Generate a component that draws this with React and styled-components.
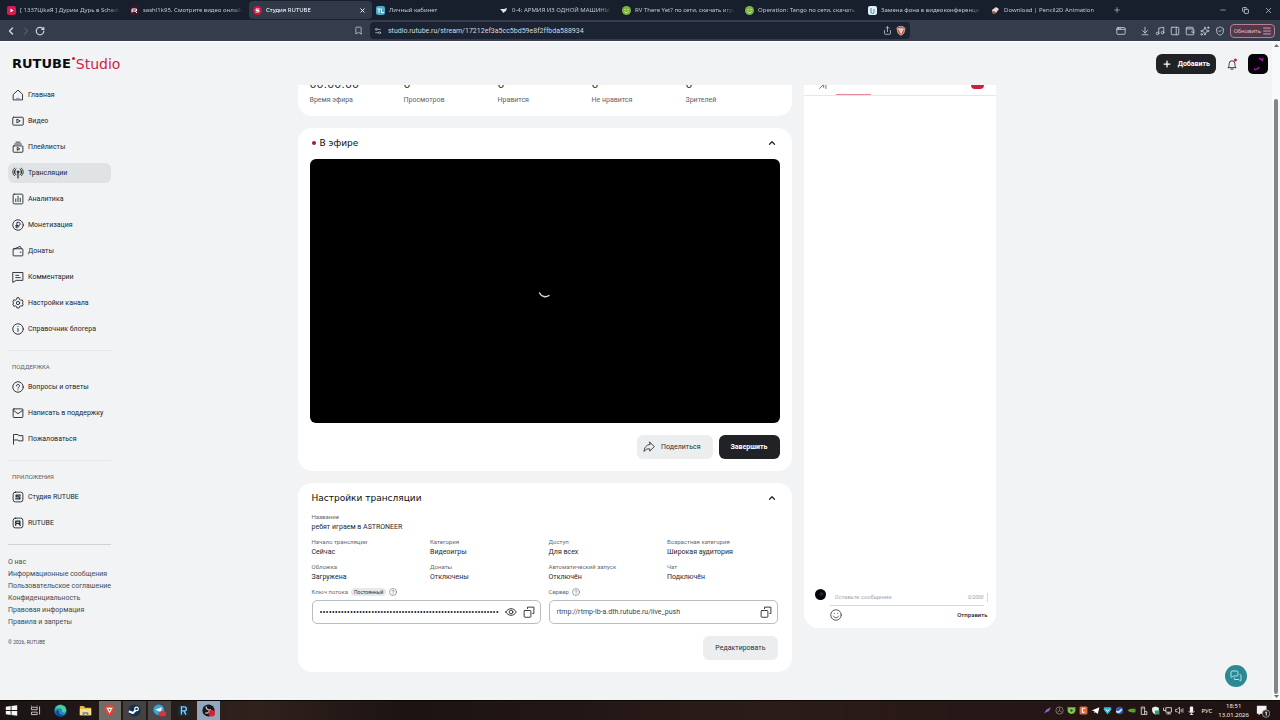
import React from 'react';
import styled, {createGlobalStyle} from 'styled-components';
import {
    AppWindow, ArrowDownToLine, Bookmark, ChevronLeft, ChevronRight, ChevronUp, Copy, Menu,
    MessagesSquare, Minus, Music, PanelRight, Plus, RotateCw, Settings2, Share, ShieldCheck, Sparkles, Wallet, X
} from 'lucide-react';

const GlobalStyle = createGlobalStyle`
  * {
    box-sizing: border-box;
  }
  body {
    margin: 0;
    background-color: #f1f3f4;
    color: #23282f;
    font-family: Roboto, "Liberation Sans", sans-serif;
    font-size: 7px;
    line-height: 10px;
  }
  button, input {
    margin: 0;
    padding: 0;
    border: none;
    background: none;
    color: inherit;
    font: inherit;
  }
  svg {
    display: block;
    flex-shrink: 0;
  }
`;

const Window = styled.div`
  display: flex;
  flex-direction: column;
  height: 100vh;
  overflow: hidden;
`;

/* Browser */

const TabStrip = styled.div`
  display: flex;
  height: 20px;
  padding-left: 3px;
  background-color: #171e2c;
  color: #c3c8d0;
  font-family: "Noto Sans", sans-serif;
  font-size: 6px;
`;

const Tab = styled.button`
  display: flex;
  align-items: center;
  flex: 0 1 123px;
  min-width: 0;
  gap: 4px;
  margin: 1px 0;
  padding: 0 6px 0 4px;
  border-radius: 4px;
  text-align: left;
  background-color: ${props => props.$active ? '#323a4a' : 'transparent'};
  color: ${props => props.$active ? '#ffffff' : 'inherit'};
  white-space: nowrap;
`;

const TabTitle = styled.span`
  flex: 1;
  min-width: 0;
  overflow: hidden;
  mask-image: linear-gradient(to right, #000 88%, transparent);
`;

const WindowControls = styled.div`
  display: flex;
  align-items: center;
  margin-left: auto;
  button {
    display: flex;
    justify-content: center;
    width: 23px;
  }
`;

const NewTab = styled.button`
  padding: 0 3px;
`;

const Toolbar = styled.div`
  display: flex;
  align-items: center;
  justify-content: space-between;
  height: 21px;
  padding: 0 5px;
  background-color: #353d4c;
  color: #ccd1d9;
`;

const ToolGroup = styled.div`
  display: flex;
  align-items: center;
  flex: 1;
  justify-content: ${props => props.$end ? 'flex-end' : 'flex-start'};
  gap: ${props => props.$end ? '5px' : '3px'};
  button {
    display: flex;
    color: inherit;
  }
  button:disabled {
    color: #6b7382;
  }
`;

const AddressBar = styled.div`
  display: flex;
  align-items: center;
  flex: 0 1 540px;
  gap: 4px;
  height: 17px;
  padding: 0 4px;
  border-radius: 4px;
  background-color: #1c2434;
  input {
    flex: 1;
    min-width: 0;
    padding-left: 2px;
    color: #d4d8df;
  }
`;

const Spacer = styled.span`
  flex: ${props => props.$fixed ? '0 0 4px' : 1};
`;

const UpdateButton = styled.button`
  && {
    align-items: center;
    gap: 1px;
    height: 14px;
    padding: 0 2px 0 3px;
    border: 1px solid #b67f92;
    border-radius: 4px;
    background-color: #523a4c;
    color: #e3b6c4;
    font-size: 6px;
  }
`;

/* Page */

const Viewport = styled.div`
  display: flex;
  flex: 1;
  min-height: 0;
  border-top: 1px solid #ffffff;
`;

const Page = styled.div`
  display: flex;
  flex-direction: column;
  flex: 1;
  min-width: 0;
`;

const ScrollTrack = styled.div`
  display: flex;
  flex-direction: column;
  align-items: center;
  justify-content: space-between;
  width: 8px;
  padding: 2px 0;
  background-color: #f8f9fa;
`;

const ScrollThumb = styled.div`
  flex: 1;
  width: 4px;
  margin: 52px 0 1px;
  border-radius: 2px;
  background-color: #858585;
`;

const Header = styled.header`
  display: flex;
  align-items: center;
  justify-content: space-between;
  height: 43px;
  padding: 0 4px 0 12px;
`;

const Logo = styled.a`
  display: flex;
  align-items: center;
  color: #0b0c0f;
  font-family: "DejaVu Sans", sans-serif;
  font-size: 13px;
  font-weight: bold;
  line-height: 14px;
  text-decoration: none;
`;

const LogoDot = styled.i`
  align-self: flex-start;
  width: 3px;
  height: 3px;
  margin: 0 1px;
  border-radius: 50%;
  background-color: #d3133f;
`;

const LogoStudio = styled.span`
  color: #cf1e49;
  font-size: 14px;
  font-weight: normal;
`;

const HeaderActions = styled.div`
  display: flex;
  align-items: center;
  gap: 10px;
`;

const Button = styled.button`
  display: flex;
  align-items: center;
  justify-content: center;
  gap: 6px;
  height: ${props => props.$small ? '20px' : '24px'};
  padding: 0 ${props => props.$small ? '6px' : '12px'};
  border-radius: 6px;
  background-color: ${props => props.$dark ? '#202226' : '#ebedef'};
  color: ${props => props.$dark ? '#ffffff' : '#2b3037'};
  font-weight: ${props => props.$dark ? 'bold' : 'normal'};
`;

const ShareButton = styled(Button)`
  padding-left: 6px;
`;

const IconButton = styled.button`
  display: flex;
`;

const Body = styled.div`
  display: flex;
  flex: 1;
  min-height: 0;
`;

const Sidebar = styled.nav`
  flex: 0 0 118px;
  padding: 0 8px;
`;

const NavList = styled.div`
  display: flex;
  flex-direction: column;
  gap: 6px;
`;

const NavItem = styled.a`
  display: flex;
  align-items: center;
  gap: 4px;
  height: 20px;
  padding: 0 4px;
  border-radius: 6px;
  background-color: ${props => props.$active ? '#dfe3e6' : 'transparent'};
  color: #22272e;
  text-decoration: none;
  white-space: nowrap;
`;

const Divider = styled.hr`
  height: 1px;
  margin: 11px 0;
  border: none;
  background-color: ${props => props.$strong ? '#d0d3d6' : '#e3e6e8'};
`;

const NavCaption = styled.div`
  margin-bottom: 5px;
  padding-left: 4px;
  color: #5d646c;
  font-size: 6px;
`;

const FooterLink = styled.a`
  display: block;
  color: #454b53;
  line-height: 12px;
  text-decoration: none;
  white-space: nowrap;
`;

const Copyright = styled.div`
  margin-top: 9px;
  color: #454b53;
  font-size: 5px;
`;

const Content = styled.main`
  display: flex;
  justify-content: center;
  flex: 1;
  gap: 12px;
  min-width: 0;
  padding-right: 98px;
`;

const Column = styled.div`
  display: flex;
  flex-direction: column;
  flex: 0 1 494px;
  gap: 12px;
`;

const Card = styled.section`
  padding: 8px 12px 12px;
  border-radius: 14px;
  background-color: #ffffff;
`;

/* The page is scrolled, so the top of this card is under the header */
const StatsCard = styled.section`
  display: grid;
  grid-template-columns: repeat(5, 1fr);
  align-content: end;
  height: 31px;
  padding: 0 12px 11px;
  border-radius: 0 0 14px 14px;
  background-color: #ffffff;
  overflow: hidden;
`;

const StatValue = styled.div`
  font-family: "DejaVu Sans", sans-serif;
  font-size: 11px;
  line-height: 14px;
`;

const StatLabel = styled.div`
  margin-top: 3px;
  color: #5d646c;
`;

const CardHeader = styled.div`
  display: flex;
  align-items: center;
  gap: 4px;
  height: 14px;
  padding: 0 3px 0 2px;
  button {
    margin-left: auto;
  }
`;

const CardTitle = styled.h2`
  margin: 0;
  color: #0b0c0f;
  font-family: "DejaVu Sans", sans-serif;
  font-size: 9px;
  font-weight: normal;
  line-height: 14px;
`;

const LiveDot = styled.i`
  width: 4px;
  height: 4px;
  border-radius: 50%;
  background-color: #b3123f;
`;

const Player = styled.div`
  display: flex;
  align-items: center;
  justify-content: center;
  aspect-ratio: 16 / 9;
  margin-top: 9px;
  border-radius: 6px;
  background-color: #000000;
`;

const Actions = styled.div`
  display: flex;
  justify-content: flex-end;
  gap: 6px;
  margin-top: 12px;
`;

const Settings = styled.div`
  display: grid;
  grid-template-columns: repeat(4, 1fr);
  gap: 5px 8px;
  margin-top: 7px;
  padding: 0 2px;
`;

const Field = styled.div`
  grid-column: span ${props => props.$span || 1};
`;

const FieldLabel = styled.label`
  display: flex;
  align-items: center;
  gap: 3px;
  color: #646b74;
  font-size: 6px;
`;

const Badge = styled.span`
  padding: 0 3px;
  border-radius: 4px;
  background-color: #e6e8ea;
  color: #2b3037;
  font-size: 5px;
  line-height: 8px;
`;

const InputBox = styled.div`
  display: flex;
  align-items: center;
  gap: 6px;
  height: 24px;
  margin-top: 3px;
  padding: 0 5px 0 7px;
  border: 1px solid #b9bdc2;
  border-radius: 5px;
  input {
    flex: 1;
    min-width: 0;
    color: #3c424a;
  }
  input[type="password"] {
    color: #14191f;
    font-size: 9px;
  }
`;

const SettingsActions = styled(Actions)`
  padding: 0 2px;
`;

const Chat = styled.aside`
  display: flex;
  flex-direction: column;
  flex: 0 1 192px;
  margin-bottom: 72px;
  border-radius: 0 0 14px 14px;
  background-color: #ffffff;
`;

const ChatHeader = styled.div`
  display: flex;
  align-items: flex-end;
  height: 11px;
  padding: 0 12px 0 14px;
  border-bottom: 1px solid #e4e6e8;
  overflow: hidden;
`;

const ChatCollapse = styled.button`
  display: flex;
  margin: 0 9px 6px 0;
`;

const ChatTab = styled.button`
  height: 18px;
  padding: 0 3px 8px;
  border-bottom: 1px solid #e58a9b;
  color: #d8506b;
  font-size: 6px;
`;

const Toggle = styled.input`
  appearance: none;
  width: 13px;
  height: 8px;
  margin: 0 0 6px auto;
  border-radius: 4px;
  background-color: #cf1f3f;
`;

const ChatForm = styled.form`
  display: grid;
  grid-template-columns: 12px 1fr 1px;
  gap: 0 3px;
  margin-top: auto;
  padding: 0 8px 4px 11px;
`;

const ChatAvatar = styled.span`
  width: 11px;
  height: 11px;
  border-radius: 50%;
  background: radial-gradient(circle at 60% 45%, #4b2a52 0, #050407 30%);
`;

const ChatLine = styled.div`
  display: flex;
  align-items: center;
  height: 17px;
  padding-left: 5px;
  border-bottom: 1px solid #d5d8db;
  color: #9aa0a6;
  font-size: 6px;
  input {
    flex: 1;
    min-width: 0;
  }
  input::placeholder {
    color: #a2a7ad;
    opacity: 1;
    font-style: italic;
  }
`;

const Counter = styled.span`
  font-size: 5px;
  font-style: italic;
`;

const ChatScroll = styled.i`
  height: 9px;
  margin-top: 4px;
  background-color: #d5d8db;
`;

const ChatTools = styled.div`
  grid-column: 2 / -1;
  display: flex;
  align-items: center;
  justify-content: space-between;
  height: 18px;
`;

const SendButton = styled.button`
  font-size: 6px;
  font-weight: 500;
`;

const HelpButton = styled.button`
  position: fixed;
  right: 33px;
  bottom: 33px;
  display: flex;
  align-items: center;
  justify-content: center;
  width: 22px;
  height: 22px;
  border-radius: 50%;
  background-color: #2a8993;
  color: #b6e4e9;
`;

/* Taskbar */

const Taskbar = styled.footer`
  display: flex;
  align-items: center;
  justify-content: space-between;
  height: 20px;
  border-top: 1px solid #0a0606;
  background: linear-gradient(to right, #191413, #30211d 20%, #1c1312 32%, #2b1c19 60%, #1f1212);
  color: #f2f2f2;
  font-family: "Noto Sans", sans-serif;
  font-size: 6px;
`;

const Apps = styled.div`
  display: grid;
  grid-template-columns: repeat(9, 1fr);
  gap: 2px;
  width: 220px;
  height: 100%;
`;

const AppButton = styled.button`
  display: flex;
  align-items: center;
  justify-content: center;
  background-color: ${props => props.$tile || 'transparent'};
`;

const Tray = styled.div`
  display: flex;
  align-items: center;
  padding-right: 10px;
`;

const TrayIcon = styled.span`
  display: flex;
  justify-content: center;
  width: 12px;
`;

const Language = styled.span`
  margin: 0 6px 0 4px;
`;

const Clock = styled.time`
  margin-right: 7px;
  line-height: 9px;
  text-align: center;
`;

const Icon = ({size = 12, width = 1.2, children}) => (
    <svg width={size} height={size} viewBox="0 0 16 16" fill="none" stroke="currentColor"
         strokeWidth={width} strokeLinecap="round" strokeLinejoin="round" aria-hidden="true">
        {children}
    </svg>
);

const icons = {
    home: <><path d="M2 7 8 1.5 14 7v7.5H2z"/><path d="M6 12.5h4" strokeOpacity=".5"/></>,
    video: <><rect x="1" y="3" width="14" height="10.5" rx="1"/><path d="M6.5 6v4.5L10.5 8.2z"/></>,
    playlists: <><rect x="1.5" y="6.5" width="13" height="8.5" rx="1"/><path d="M3.5 4h9M5.5 1.5h5M7 9v3.5l3-1.7z"/></>,
    live: <><circle cx="8" cy="6.5" r="1.3" fill="currentColor"/><path d="M8 8v6.5" strokeWidth="1.6"/><path d="M5.2 2.5a5.500 5.500 0 0 0 0 8M10.8 2.5a5.500 5.500 0 0 1 0 8M3.500 11.500C.2 10 .2 3 3.500 1.500M12.500 11.500c3.300-1.500 3.300-8.500 0-10M3.300 5v3M12.700 5v3"/></>,
    analytics: <><rect x="1.5" y="1.5" width="13" height="13" rx="1.5"/><path d="M5 11.5V8M8 11.5v-7M11 11.5V7"/></>,
    money: <><circle cx="8" cy="8" r="7"/><path d="M6.5 12V4.5h2.3a2.1 2.1 0 0 1 0 4.2H5M5 10.5h4"/></>,
    donate: <><rect x="1.5" y="5" width="13" height="9.5" rx="1"/><path d="M3.5 5 11 1.8l1.5 3M11 9.7h1"/></>,
    comments: <><path d="M1.5 2h13v10.5h-9L1.5 15z"/><path d="M5 5.8h4M5 8.8h6"/></>,
    settings: <><path d="m6.5 1.5-.6 2-1.5.8-2-.5L1 6.6 2.4 8 1 9.5l1.5 2.8 2-.5 1.4.8.6 2h3l.6-2 1.5-.8 2 .5L15 9.5 13.6 8 15 6.6l-1.5-2.8-2 .5-1.4-.8-.6-2z"/><circle cx="8" cy="8" r="2.2"/></>,
    info: <><circle cx="8" cy="8" r="7"/><path d="M8 7.3v4M8 4.6v.2"/></>,
    question: <><circle cx="8" cy="8" r="7"/><path d="M6 6.5a2 2 0 1 1 3 1.7c-.7.4-1 .7-1 1.4M8 11.8v.1"/></>,
    mail: <><rect x="1.5" y="2.5" width="13" height="11.5" rx="1"/><path d="m2 4.5 6 4.5 6-4.5"/></>,
    flag: <path d="M2 15V2h6l1 1.5h5.5v7H9L8 9.3H2"/>,
    studio: <><rect x="1.5" y="1.5" width="13" height="13" rx="3"/><path d="M11 5.5H5.5v2.4h5v2.6H5" strokeWidth="1.7"/></>,
    rutube: <><rect x="1.5" y="1.5" width="13" height="13" rx="3"/><path d="M5 11V5.5h5.5v3H5M9 8.5l2 2.5" strokeWidth="1.7"/></>,
    bell: <><path d="M3 12.5c1.2-1.3 1.2-3 1.2-5a3.8 3.8 0 0 1 7.6 0c0 2 0 3.7 1.2 5zM6.5 14.8h3"/><circle cx="12.5" cy="2.5" r="2" fill="#c9183f" stroke="none"/></>,
    share: <path d="M9 1.5 15 7.5l-6 6v-3C6 10 3.500 11 1.500 14 1.500 9 4.500 5 9 4.700z"/>,
    eye: <><path d="M1 8c3.5-6 10.5-6 14 0-3.5 6-10.5 6-14 0z"/><circle cx="8" cy="8" r="2.5"/></>,
    copy: <><rect x="1.5" y="6" width="9" height="9" rx="1"/><path d="M6 3.5V1.5h8.5V10H13"/></>,
    smile: <><circle cx="8" cy="8" r="7"/><path d="M4.5 9.5c1.5 3 5.5 3 7 0M5.7 5.8v.2M10.3 5.8v.2"/></>,
    collapse: <path d="M14 3v12M3 15l7-7M5 8h5v5"/>
};

const dot = (fill, label) => (
    <svg width="9" height="9" viewBox="0 0 9 9" aria-hidden="true">
        <circle cx="4.5" cy="4.5" r="4.5" fill={fill}/>
        {label}
    </svg>
);

const square = (fill, mark) => (
    <svg width="9" height="9" viewBox="0 0 9 9" aria-hidden="true">
        <rect width="9" height="9" rx="2" fill={fill}/>
        {mark}
    </svg>
);

const greenFace = dot('#7cb342', <path d="M2.5 3.5h1M5.5 3.5h1M2.5 5.5c1 1.5 3 1.5 4 0" stroke="#dcedc8" fill="none"/>);

const tabs = [
    {title: '[ 1337ЦikaЯ ] Дурим Дурь в Schedu', icon: square('#d51b50', <path d="M3.5 2.5v4l3-2z" fill="#fff"/>)},
    {title: 'sashl1k95. Смотрите видео онлайн,', icon: square('#40132d', <path d="M2 6.5V3h4.5v2H2M5 5l2 2" stroke="#fff" fill="none"/>)},
    {title: 'Студия RUTUBE', icon: dot('#d3133f', <path d="M6.5 3H3v1.5h3V6H2.5" stroke="#fff" fill="none"/>), active: true},
    {title: 'Личный кабинет', icon: square('#4aa9c4', <path d="M1.5 3h3M3 3v4M5.5 2.5v4H8" stroke="#fff" fill="none"/>)},
    {title: '0-4: АРМИЯ ИЗ ОДНОЙ МАШИНЫ', icon: <svg width="9" height="9" viewBox="0 0 9 9"><path d="M1 3h4l3-1-1 3-3 2-1-2z" fill="#e4e6e8"/></svg>},
    {title: 'RV There Yet? по сети, скачать игру', icon: greenFace},
    {title: 'Operation: Tango по сети, скачать и', icon: greenFace},
    {title: 'Замена фона в видеоконференци', icon: square('#dff0f8', <path d="M3 2v4a1.5 1.5 0 0 0 3 0V3" stroke="#3a8fb5" fill="none"/>)},
    {title: 'Download | Pencil2D Animation', icon: <svg width="9" height="9" viewBox="0 0 9 9"><path d="M1 4 5 1l3 2-3 4-3 1z" fill="#e9d6c8"/><path d="M2 5l3 1-1 2H2z" fill="#c6452f"/></svg>}
];

const navItems = [
    ['home', 'Главная'],
    ['video', 'Видео'],
    ['playlists', 'Плейлисты'],
    ['live', 'Трансляции'],
    ['analytics', 'Аналитика'],
    ['money', 'Монетизация'],
    ['donate', 'Донаты'],
    ['comments', 'Комментарии'],
    ['settings', 'Настройки канала'],
    ['info', 'Справочник блогера']
];

const supportItems = [
    ['question', 'Вопросы и ответы'],
    ['mail', 'Написать в поддержку'],
    ['flag', 'Пожаловаться']
];

const appItems = [
    ['studio', 'Студия RUTUBE'],
    ['rutube', 'RUTUBE']
];

const footerLinks = [
    'О нас',
    'Информационные сообщения',
    'Пользовательское соглашение',
    'Конфиденциальность',
    'Правовая информация',
    'Правила и запреты'
];

const stats = [
    ['00:00:00', 'Время эфира'],
    ['0', 'Просмотров'],
    ['0', 'Нравится'],
    ['0', 'Не нравится'],
    ['0', 'Зрителей']
];

const fields = [
    ['Начало трансляции', 'Сейчас'],
    ['Категория', 'Видеоигры'],
    ['Доступ', 'Для всех'],
    ['Возрастная категория', 'Широкая аудитория'],
    ['Обложка', 'Загружена'],
    ['Донаты', 'Отключены'],
    ['Автоматический запуск', 'Отключён'],
    ['Чат', 'Подключён']
];

const apps = [
    {name: 'Пуск', icon: <path d="M1 3.5 7 2.6V7.500H1zM8 2.5 15 1.500v6H8zM1 8.500h6v5L1 12.6zM8 8.500h7v6l-7-1z" fill="#f5f5f5"/>},
    {name: 'Представление задач', icon: <path d="M3 4h7v3H3zM3 10h7v3H3zM3 2v1M10 2v1M13 3v10" stroke="#e6e6e6" fill="none"/>},
    {name: 'Edge', icon: <><circle cx="8" cy="8" r="7.5" fill="#1f86cf"/><path d="M1 7c1-5 6-7 10-5 4 1.5 5 6 3 8-2 1-5 0-4-2 0-3-5-4-9-1z" fill="#4ed08c"/><path d="M6 8c-1 4 3 7 8 5-3 4-10 3-12-2 0-2 2-4 4-3z" fill="#0d4f93"/></>},
    {name: 'Проводник', icon: <><path d="M1 2.5h5l1.5 2H15v9H1z" fill="#e5b447"/><path d="M1 6h14v8H1z" fill="#f9dc85"/><path d="M4.5 14v-4h7v4h-2v-2h-3v2z" fill="#4a94ba"/></>},
    {name: 'Brave', tile: '#706a69', icon: <><path d="M4.5 1h7l3 3-2 7.5L8 15l-4.5-3.5L1.5 4z" fill="#e4452c"/><path d="M4 4.5h8l-2 3.5-2 4-2-4z" fill="#fff"/><path d="M6.5 6h3L8 9z" fill="#e4452c"/></>},
    {name: 'Steam', tile: '#444142', icon: <><circle cx="8" cy="8" r="7.5" fill="#14314f"/><path d="m1 9 5 2 4-4" stroke="#fff" strokeWidth="2.5" fill="none"/><circle cx="10.5" cy="6" r="2.2" fill="#14314f" stroke="#fff" strokeWidth="1.5"/></>},
    {name: 'Telegram', tile: '#4c4847', icon: <><circle cx="7" cy="7" r="6.5" fill="#36a5da"/><path d="m3 7 8-3-1.5 7L7 9z" fill="#fff"/><rect x="7" y="9" width="9" height="6" rx="2" fill="#df3140"/></>},
    {name: 'R', icon: <><rect x="1" y="1" width="14" height="14" fill="#132d40"/><path d="M5.5 13V3.5H9a2.5 2.5 0 0 1 0 5H5.5M8.5 8.5 11 13" stroke="#8fc8df" strokeWidth="1.7" fill="none"/></>},
    {name: 'OBS', tile: '#93a8bd', icon: <><circle cx="8" cy="8" r="7.5" fill="#17181b"/><path d="M5 3c0 4 3 5 6 4M4 11c3 1 5-1 5-4" stroke="#c9ccd0" strokeWidth="1.5" fill="none"/><circle cx="12" cy="11.5" r="4" fill="#e01f2d"/></>}
];

const trayIcons = [
    <path d="M2 13 6 6l8-4-3 7z" fill="#8c66c9"/>,
    <><circle cx="8" cy="8" r="6.5" stroke="#b7b0b0" fill="none"/><path d="M8 8V3M8 8l4 3M8 8l-4 3" stroke="#b7b0b0"/></>,
    <><path d="M1 2h14v6c0 4-4 6-7 6S1 12 1 8z" fill="#79c142"/><circle cx="8" cy="8" r="3" fill="#24521b" stroke="#d7f0bd"/></>,
    <><rect x="1" y="1" width="14" height="14" rx="2" fill="#e46a35"/><path d="M6 4h5M6 4v7h4" stroke="#fff" strokeWidth="2" fill="none"/></>,
    <path d="m1 8 14-6-3 12-4-3-2 2V9z" fill="#ffffff"/>,
    <><path d="M2 2h12l1 4-7 9-7-9z" fill="#32b7dc"/><path d="m5 6 3 4 3-4" stroke="#fff" strokeWidth="1.5" fill="none"/></>,
    <><circle cx="8" cy="8" r="6.5" fill="#345fb0"/><path d="m2 10 5 1 5-5" stroke="#dce6fa" strokeWidth="3" fill="none"/></>,
    <path d="M1 8c4-4 9-3 14-3v6C9 12 4 11 1 8z" fill="#5aa02c"/>,
    <path d="M4 2h6v13H4zM6 5h2M10 10h4v5h-4" stroke="#e9e9e9" strokeWidth="1.5" fill="none"/>,
    <><path d="M8 1 14 3v5c0 4-3 6-6 7-3-1-6-3-6-7V3z" fill="#e7eee9"/><path d="M7 8h8v7H7z" fill="#2da567"/></>,
    <path d="M5 3h10v8H5zM1 3v5h4M10 11v3M6 14h8" stroke="#e9e9e9" strokeWidth="1.5" fill="none"/>,
    <path d="M1 6h3l4-4v12L4 10H1zM11 5v6M14 4v8" stroke="#e9e9e9" strokeWidth="1.3" fill="none"/>,
    <><rect x="5" y="1" width="6" height="10" rx="2" fill="#f2f2f2"/><path d="M3 9c1 4 9 4 10 0M8 12v3M5 15h6" stroke="#f2f2f2" strokeWidth="1.5" fill="none"/></>
];

const Browser = () => (
    <>
        <TabStrip>
            {tabs.map(({title, icon, active}) => (
                <Tab key={title} $active={active}>
                    {icon}
                    <TabTitle>{title}</TabTitle>
                    {active && <X size={7} strokeWidth={3}/>}
                </Tab>
            ))}
            <NewTab aria-label="Новая вкладка"><Plus size={8}/></NewTab>
            <WindowControls>
                <button aria-label="Свернуть"><Minus size={8}/></button>
                <button aria-label="Восстановить"><Copy size={7} strokeWidth={3}/></button>
                <button aria-label="Закрыть"><X size={9}/></button>
            </WindowControls>
        </TabStrip>
        <Toolbar>
            <ToolGroup>
                <button aria-label="Назад"><ChevronLeft size={12} strokeWidth={3}/></button>
                <button aria-label="Вперёд" disabled><ChevronRight size={12}/></button>
                <button aria-label="Обновить"><RotateCw size={10} strokeWidth={3}/></button>
                <Spacer/>
                <button aria-label="В закладки"><Bookmark size={9}/></button>
                <Spacer $fixed/>
            </ToolGroup>
            <AddressBar>
                <Settings2 size={8}/>
                <input aria-label="Адрес" readOnly value="studio.rutube.ru/stream/17212ef3a5cc5bd59e8f2ffbda588934"/>
                <Share size={9}/>
                <Icon size={10}>{apps[4].icon}</Icon>
            </AddressBar>
            <ToolGroup $end>
                <button aria-label="Картинка в картинке"><AppWindow size={10}/></button>
                <Spacer $fixed/>
                <button aria-label="Загрузки"><ArrowDownToLine size={10}/></button>
                <button aria-label="Медиа"><Music size={10}/></button>
                <button aria-label="Панель"><PanelRight size={10}/></button>
                <button aria-label="Кошелёк"><Wallet size={10}/></button>
                <button aria-label="Leo"><Sparkles size={10}/></button>
                <button aria-label="VPN"><ShieldCheck size={10}/></button>
                <UpdateButton>Обновить<Menu size={10}/></UpdateButton>
            </ToolGroup>
        </Toolbar>
    </>
);

const Nav = ({items, active}) => (
    <NavList>
        {items.map(([icon, label]) => (
            <NavItem key={label} href="#" $active={label === active}>
                <Icon>{icons[icon]}</Icon>
                {label}
            </NavItem>
        ))}
    </NavList>
);

const Collapse = () => (
    <IconButton aria-label="Свернуть"><ChevronUp size={10} strokeWidth={3}/></IconButton>
);

const LiveCard = () => (
    <Card>
        <CardHeader>
            <LiveDot/>
            <CardTitle>В эфире</CardTitle>
            <Collapse/>
        </CardHeader>
        <Player>
            <svg width="14" height="14" viewBox="0 0 14 14" fill="none" stroke="#d8d8d8" strokeWidth="1.5" strokeLinecap="round">
                <path d="M1.500 9c2 4 6.500 4.500 9.500 2.500"/>
            </svg>
        </Player>
        <Actions>
            <ShareButton><Icon>{icons.share}</Icon>Поделиться</ShareButton>
            <Button $dark>Завершить</Button>
        </Actions>
    </Card>
);

const SettingsCard = () => (
    <Card>
        <CardHeader>
            <CardTitle>Настройки трансляции</CardTitle>
            <Collapse/>
        </CardHeader>
        <Settings>
            <Field $span={4}>
                <FieldLabel as="div">Название</FieldLabel>
                ребят играем в ASTRONEER
            </Field>
            {fields.map(([label, value]) => (
                <Field key={label}>
                    <FieldLabel as="div">{label}</FieldLabel>
                    {value}
                </Field>
            ))}
            <Field $span={2}>
                <FieldLabel htmlFor="key">Ключ потока<Badge>Постоянный</Badge><Icon size={8}>{icons.question}</Icon></FieldLabel>
                <InputBox>
                    <input id="key" type="password" readOnly value={'0'.repeat(60)}/>
                    <IconButton aria-label="Показать"><Icon>{icons.eye}</Icon></IconButton>
                    <IconButton aria-label="Копировать ключ"><Icon>{icons.copy}</Icon></IconButton>
                </InputBox>
            </Field>
            <Field $span={2}>
                <FieldLabel htmlFor="server">Сервер<Icon size={8}>{icons.question}</Icon></FieldLabel>
                <InputBox>
                    <input id="server" readOnly value="rtmp://rtmp-lb-a.dth.rutube.ru/live_push"/>
                    <IconButton aria-label="Копировать сервер"><Icon>{icons.copy}</Icon></IconButton>
                </InputBox>
            </Field>
        </Settings>
        <SettingsActions>
            <Button>Редактировать</Button>
        </SettingsActions>
    </Card>
);

const ChatPanel = () => (
    <Chat>
        <ChatHeader>
            <ChatCollapse aria-label="Скрыть чат"><Icon size={9}>{icons.collapse}</Icon></ChatCollapse>
            <ChatTab>Чат эфира</ChatTab>
            <Toggle type="checkbox" defaultChecked aria-label="Чат включён"/>
        </ChatHeader>
        <ChatForm>
            <ChatAvatar/>
            <ChatLine>
                <input aria-label="Сообщение" placeholder="Оставьте сообщение"/>
                <Counter>0/2000</Counter>
            </ChatLine>
            <ChatScroll/>
            <ChatTools>
                <IconButton type="button" aria-label="Эмодзи"><Icon width={1}>{icons.smile}</Icon></IconButton>
                <SendButton type="button">Отправить</SendButton>
            </ChatTools>
        </ChatForm>
    </Chat>
);

const App = () => (
    <Window>
        <GlobalStyle/>
        <Browser/>
        <Viewport>
            <Page>
                <Header>
                    <Logo href="#">RUTUBE<LogoDot/><LogoStudio>Studio</LogoStudio></Logo>
                    <HeaderActions>
                        <Button $dark $small><Plus size={10} strokeWidth={3}/>Добавить</Button>
                        <IconButton aria-label="Уведомления"><Icon>{icons.bell}</Icon></IconButton>
                        <IconButton aria-label="Профиль">
                            <svg width="20" height="20" viewBox="0 0 20 20">
                                <rect width="20" height="20" rx="5" fill="#050308"/>
                                <path d="m11 4 4 3M6 15c2 1 4 0 5-2M14 6l1-2" stroke="#a11bb0" strokeWidth="1.5" fill="none"/>
                            </svg>
                        </IconButton>
                    </HeaderActions>
                </Header>
                <Body>
                    <Sidebar>
                        <Nav items={navItems} active="Трансляции"/>
                        <Divider/>
                        <NavCaption>ПОДДЕРЖКА</NavCaption>
                        <Nav items={supportItems}/>
                        <Divider/>
                        <NavCaption>ПРИЛОЖЕНИЯ</NavCaption>
                        <Nav items={appItems}/>
                        <Divider $strong/>
                        {footerLinks.map(link => <FooterLink key={link} href="#">{link}</FooterLink>)}
                        <Copyright>© 2026, RUTUBE</Copyright>
                    </Sidebar>
                    <Content>
                        <Column>
                            <StatsCard>
                                {stats.map(([value, label]) => (
                                    <div key={label}>
                                        <StatValue>{value}</StatValue>
                                        <StatLabel>{label}</StatLabel>
                                    </div>
                                ))}
                            </StatsCard>
                            <LiveCard/>
                            <SettingsCard/>
                        </Column>
                        <ChatPanel/>
                    </Content>
                </Body>
            </Page>
            <ScrollTrack>
                <svg width="5" height="3" viewBox="0 0 5 3"><path d="M0 3 2.5 0 5 3z" fill="#6d6d6d"/></svg>
                <ScrollThumb/>
                <svg width="5" height="3" viewBox="0 0 5 3"><path d="M0 0h5L2.5 3z" fill="#6d6d6d"/></svg>
            </ScrollTrack>
        </Viewport>
        <HelpButton aria-label="Помощь"><MessagesSquare size={12}/></HelpButton>
        <Taskbar>
            <Apps>
                {apps.map(({name, icon, tile}) => (
                    <AppButton key={name} aria-label={name} $tile={tile}>
                        <svg width="13" height="13" viewBox="0 0 16 16">{icon}</svg>
                    </AppButton>
                ))}
            </Apps>
            <Tray>
                {trayIcons.map((icon, i) => (
                    <TrayIcon key={i}><svg width="9" height="9" viewBox="0 0 16 16">{icon}</svg></TrayIcon>
                ))}
                <Language>РУС</Language>
                <Clock>18:51<br/>13.01.2026</Clock>
                <svg width="14" height="14" viewBox="0 0 16 16">
                    <path d="M1 2h11v9H5l-2 2v-2H1z" fill="#f2f2f2"/>
                    <circle cx="11.5" cy="11" r="4.3" fill="#2b2020" stroke="#bdb8b8" strokeWidth=".8"/>
                    <path d="M10.5 9.8 11.8 9v4.2" stroke="#fff" fill="none"/>
                </svg>
            </Tray>
        </Taskbar>
    </Window>
);

export default App;
